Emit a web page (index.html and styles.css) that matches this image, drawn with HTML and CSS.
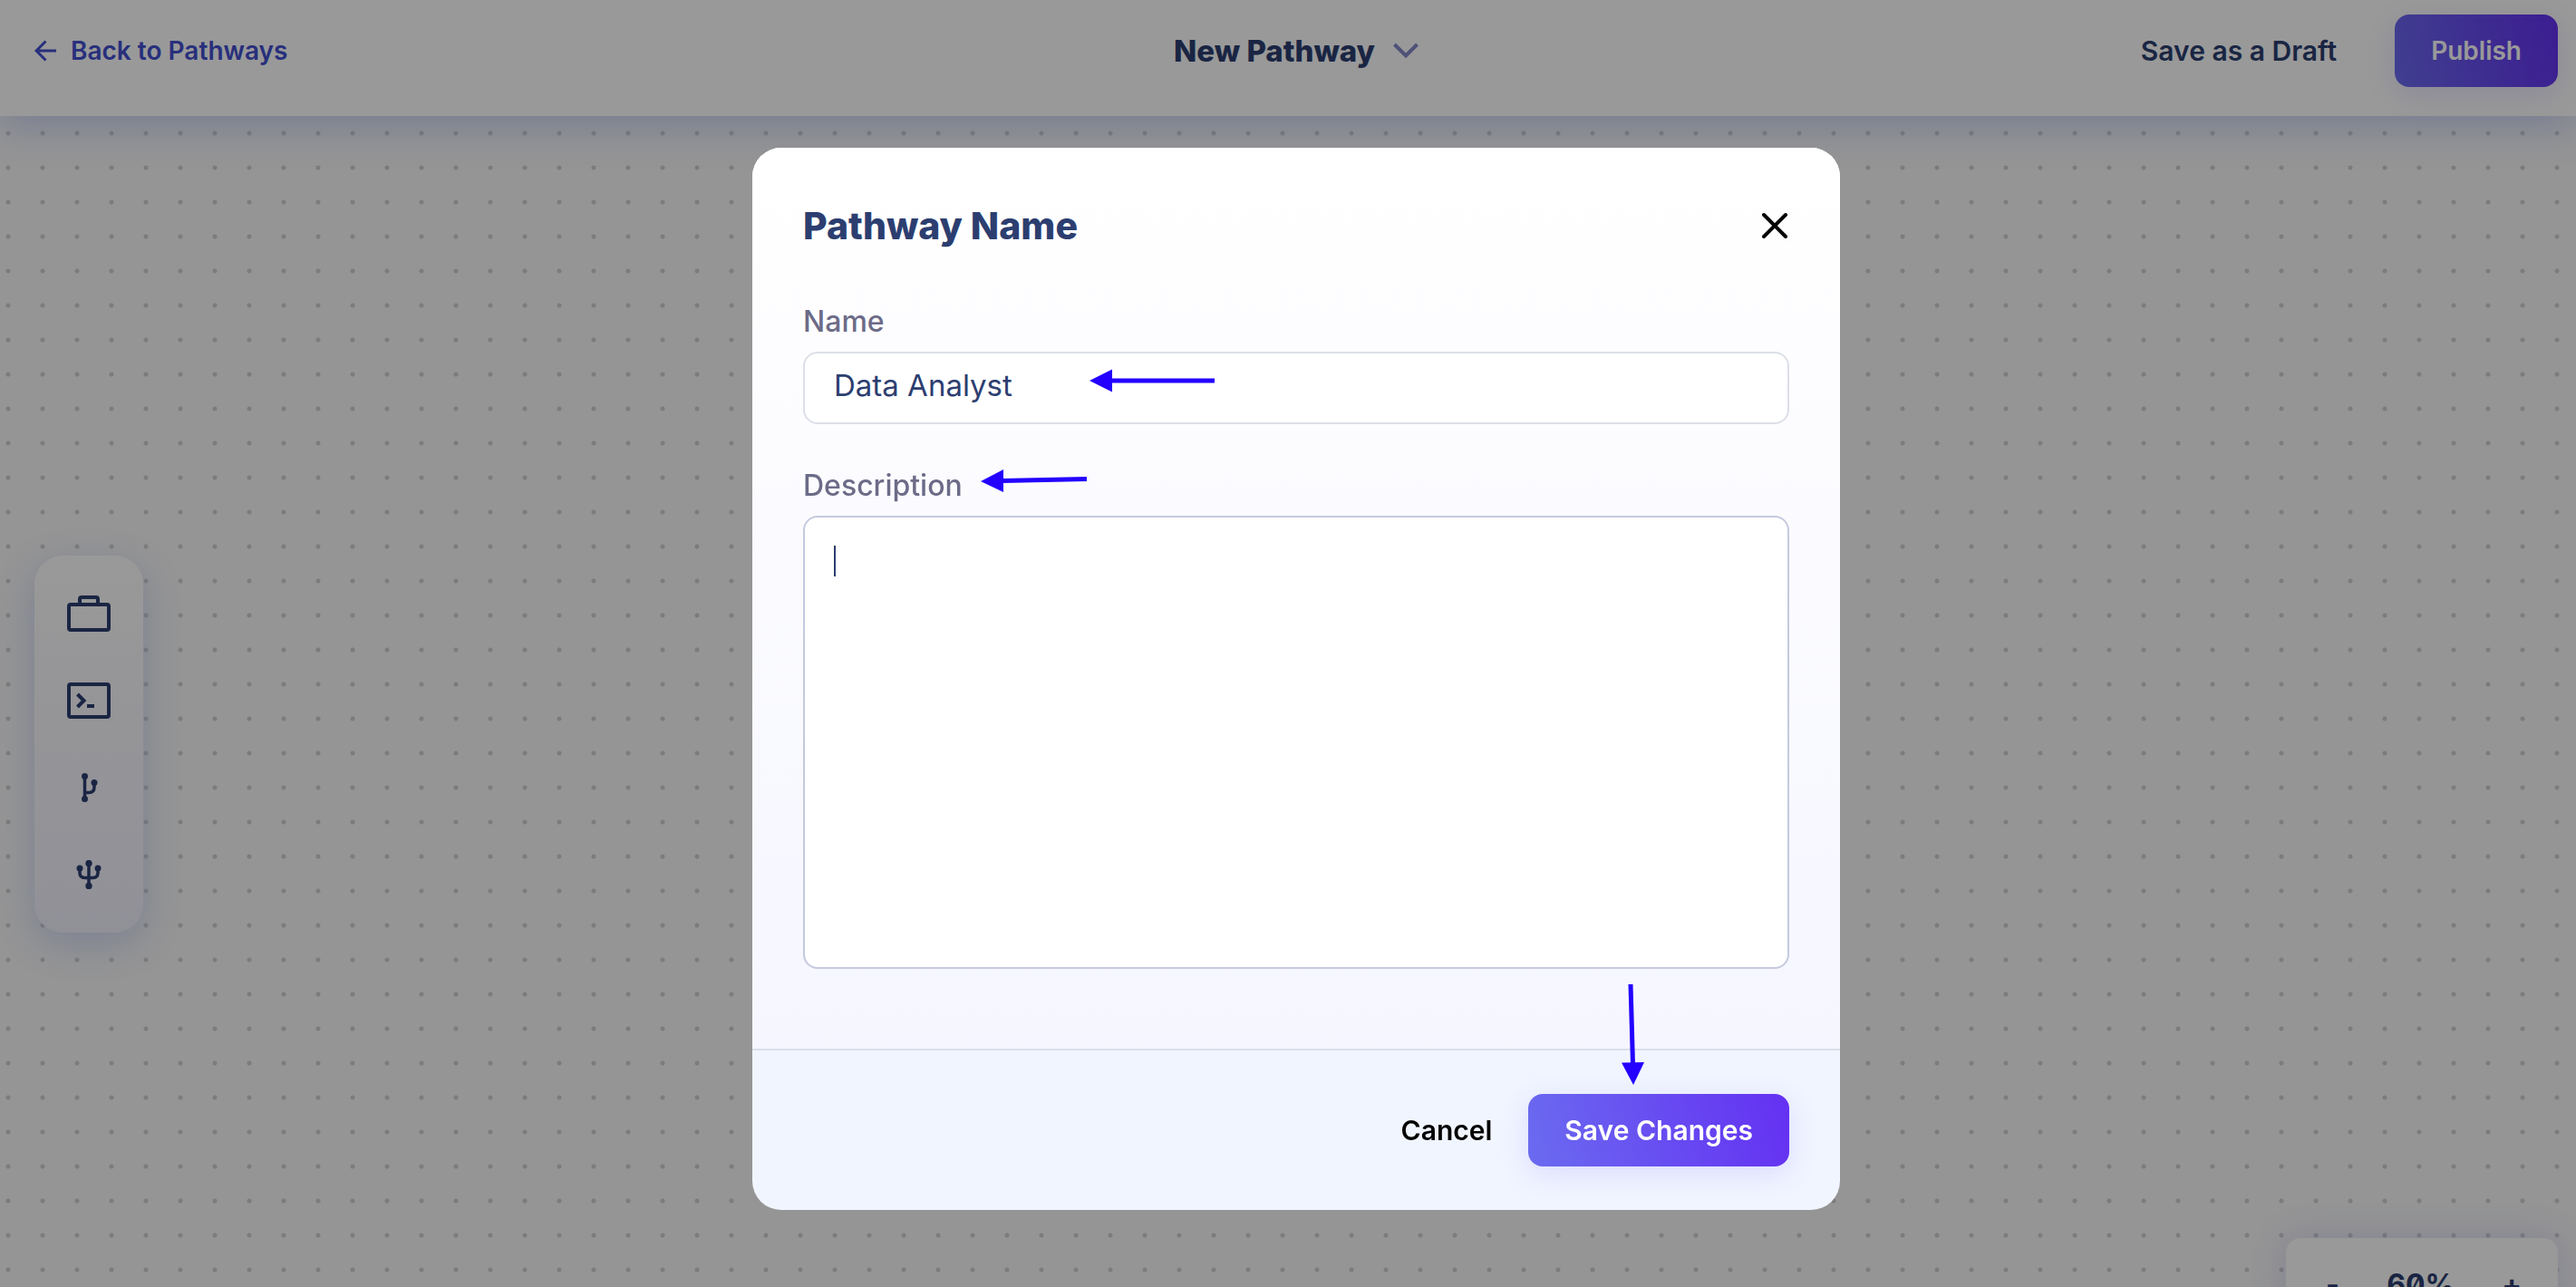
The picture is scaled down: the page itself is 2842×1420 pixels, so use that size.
FILE: index.html
```
<!DOCTYPE html>
<html lang="en">
<head>
  <meta charset="UTF-8">
  <meta name="viewport" content="width=device-width, initial-scale=1.0">
  <title>New Pathway</title>
  <link rel="stylesheet" href="styles.css">
</head>
<body>
  <header class="topbar">
    <a class="back" href="#">
      <svg width="24" height="24" viewBox="0 0 24 24" fill="none" stroke="currentColor" stroke-width="3">
        <path d="M24 12H2M12.500 1.500L2 12l10.500 10.500"/>
      </svg>
      Back to Pathways
    </a>
    <button class="pathway-title" type="button">
      New Pathway
      <svg width="28" height="18" viewBox="0 0 28 18" fill="none" stroke="#8287c8" stroke-width="4">
        <path d="M1.500 2L14 14.500 26.500 2"/>
      </svg>
    </button>
    <div class="topbar-actions">
      <button class="btn-text" type="button">Save as a Draft</button>
      <button class="btn-primary publish" type="button">Publish</button>
    </div>
  </header>

  <main class="canvas">
    <nav class="tools" aria-label="Blocks">
      <button class="tool" type="button" aria-label="Job">
        <svg width="48" height="40" viewBox="0 0 48 40" fill="none" stroke="currentColor" stroke-width="4">
          <rect x="2" y="10" width="44" height="28" rx="2"/>
          <path d="M14 10V4a2 2 0 0 1 2-2h16a2 2 0 0 1 2 2v6"/>
        </svg>
      </button>
      <button class="tool" type="button" aria-label="Skill">
        <svg width="48" height="40" viewBox="0 0 48 40" fill="none" stroke="currentColor" stroke-width="4">
          <rect x="2" y="2" width="44" height="36" rx="2"/>
          <path d="M11.500 13L18.500 20l-7 7M22 26h8"/>
        </svg>
      </button>
      <button class="tool" type="button" aria-label="Branch">
        <svg width="32" height="32" viewBox="0 0 32 32" fill="none" stroke="currentColor" stroke-width="3.500">
          <path d="M11.500 3.500v25M22 10.500v5q0 6-6 6h-4.500"/>
          <g fill="currentColor" stroke="none">
            <circle cx="11.500" cy="3.500" r="3.500"/>
            <circle cx="11.500" cy="28.500" r="3.500"/>
            <circle cx="22" cy="10.500" r="3.500"/>
          </g>
        </svg>
      </button>
      <button class="tool" type="button" aria-label="Split">
        <svg width="32" height="32" viewBox="0 0 32 32" fill="none" stroke="currentColor" stroke-width="3.500">
          <path d="M16 3.500v25M6 9v5q0 5.500 5.500 5.500h9q5.500 0 5.500-5.500v-5"/>
          <g fill="currentColor" stroke="none">
            <circle cx="16" cy="3.500" r="3.700"/>
            <circle cx="16" cy="28.500" r="3.700"/>
            <circle cx="6" cy="9" r="3.500"/>
            <circle cx="26" cy="9" r="3.500"/>
          </g>
        </svg>
      </button>
    </nav>

    <div class="zoom">
      <button type="button">-</button>
      <span>60%</span>
      <button type="button">+</button>
    </div>
  </main>

  <div class="overlay">
    <form class="modal" role="dialog" aria-labelledby="modal-title">
      <div class="modal-body">
        <div class="modal-head">
          <h2 id="modal-title">Pathway Name</h2>
          <button class="close" type="button" aria-label="Close">
            <svg width="32" height="32" viewBox="0 0 32 32" fill="none" stroke="#000" stroke-width="4" stroke-linecap="round">
              <path d="M4 4l24 24M28 4L4 28"/>
            </svg>
          </button>
        </div>
        <div class="field">
          <label for="name">Name</label>
          <input id="name" type="text" value="Data Analyst">
        </div>
        <div class="field">
          <label for="description">Description</label>
          <div class="textarea-wrap">
            <textarea id="description"></textarea>
            <span class="caret"></span>
          </div>
        </div>
      </div>
      <div class="modal-foot">
        <button class="btn-text cancel" type="button">Cancel</button>
        <button class="btn-primary" type="button">Save Changes</button>
      </div>

      <!-- pointer arrows -->
      <svg class="arrows" viewBox="0 0 1200 1172" fill="#2300ff" stroke="#2300ff">
        <path d="M395 257H510" stroke-width="5"/>
        <path d="M372 257l25-12.500v25z" stroke="none"/>
        <path d="M275 367.500L369 365.500" stroke-width="5"/>
        <path d="M252 368l25-13v25z" stroke="none"/>
        <path d="M969 923L971.500 1012" stroke-width="5"/>
        <path d="M972 1034l-13-24.500 25-.500z" stroke="none"/>
      </svg>
    </form>
  </div>
</body>
</html>
```
FILE: styles.css
```
* {
  box-sizing: border-box;
}
body {
  display: flex;
  flex-direction: column;
  height: 100vh;
  margin: 0;
  overflow: hidden;
  font-family: Inter, "Liberation Sans", sans-serif;
  color: #2c3e70;
}
button {
  border: none;
  padding: 0;
  background: none;
  font: inherit;
  color: inherit;
  cursor: pointer;
}
svg {
  display: block;
}

/* top bar */
.topbar {
  position: relative;
  z-index: 1;
  display: grid;
  grid-template-columns: 1fr auto 1fr;
  align-items: center;
  padding: 16px 20px 32px 38px;
  background: #fff;
  box-shadow: 0 12px 40px rgba(90, 120, 230, 0.3);
}
.back {
  display: flex;
  align-items: center;
  gap: 16px;
  font-size: 28px;
  font-weight: 600;
  color: #434fcf;
  text-decoration: none;
}
.pathway-title {
  display: flex;
  align-items: center;
  gap: 20px;
  font-size: 33px;
  font-weight: 800;
}
.topbar-actions {
  display: flex;
  justify-content: flex-end;
  align-items: center;
  gap: 64px;
}
.btn-text {
  font-size: 30px;
  font-weight: 600;
}
.btn-primary {
  height: 80px;
  padding: 0 40px;
  border-radius: 16px;
  background: linear-gradient(75deg, #6b6bf0, #6430f2);
  box-shadow: 0 8px 32px rgba(100, 80, 240, 0.15);
  font-size: 30px;
  font-weight: 600;
  color: #fff;
}
.publish {
  font-size: 28px;
}

/* canvas */
.canvas {
  position: relative;
  flex: 1;
  background: #f8f8f8 radial-gradient(circle, #cfcfcf 2px, transparent 3px) -10px 0 / 38px 38px;
}
.tools {
  position: absolute;
  left: 38px;
  top: 485px;
  display: flex;
  flex-direction: column;
  width: 120px;
  padding: 16px 0;
  border-radius: 32px;
  background: linear-gradient(#fff, #f1f1fc);
  box-shadow: 0 12px 40px rgba(90, 120, 230, 0.25);
}
.tool {
  display: flex;
  justify-content: center;
  align-items: center;
  height: 96px;
}
.zoom {
  position: absolute;
  right: 20px;
  bottom: -48px;
  display: flex;
  justify-content: space-between;
  align-items: center;
  width: 300px;
  height: 102px;
  padding: 0 40px 0 44px;
  border-radius: 16px;
  background: #fff;
  box-shadow: 0 0 40px rgba(90, 100, 230, 0.2);
  font-size: 32px;
  font-weight: 700;
  font-feature-settings: "zero";
}

/* modal */
.overlay {
  position: fixed;
  inset: 0;
  z-index: 2;
  display: flex;
  justify-content: center;
  align-items: flex-start;
  padding: 163px 20px 0 38px;
  background: rgba(0, 0, 0, 0.4);
}
.modal {
  position: relative;
  width: 100%;
  max-width: 1200px;
  border-radius: 32px;
  background: #f1f5ff;
  overflow: hidden;
}
.modal-body {
  display: flex;
  flex-direction: column;
  gap: 48px;
  padding: 56px 56px 88px;
  background: linear-gradient(#fff, #fdfdff 25%, #f5f6ff);
}
.modal-head {
  display: flex;
  justify-content: space-between;
  align-items: center;
  margin-bottom: 8px;
}
.modal-head h2 {
  margin: 0;
  font-size: 41px;
  font-weight: 800;
  line-height: 60px;
}
.field {
  display: flex;
  flex-direction: column;
  gap: 13px;
}
.field label {
  font-size: 32px;
  line-height: 40px;
  font-weight: 500;
  color: #6c6b88;
}
.field input,
.field textarea {
  display: block;
  width: 100%;
  height: 80px;
  padding: 0 32px 6px;
  border: 2px solid #dcdfe7;
  border-radius: 16px;
  outline: none;
  background: #fff;
  font: inherit;
  font-size: 33px;
  color: #2c3e70;
}
.field textarea {
  height: 500px;
  padding: 30px 32px;
  border-color: #c5c9e0;
  resize: none;
}
.textarea-wrap {
  position: relative;
}
.caret {
  position: absolute;
  left: 34px;
  top: 33px;
  width: 2px;
  height: 34px;
  background: #2c3e70;
}
.modal-foot {
  display: flex;
  justify-content: flex-end;
  align-items: center;
  gap: 40px;
  padding: 48px 56px;
  border-top: 2px solid #dadfe9;
}
.cancel {
  color: #000;
}
.arrows {
  position: absolute;
  inset: 0;
  width: 100%;
  pointer-events: none;
}
```
